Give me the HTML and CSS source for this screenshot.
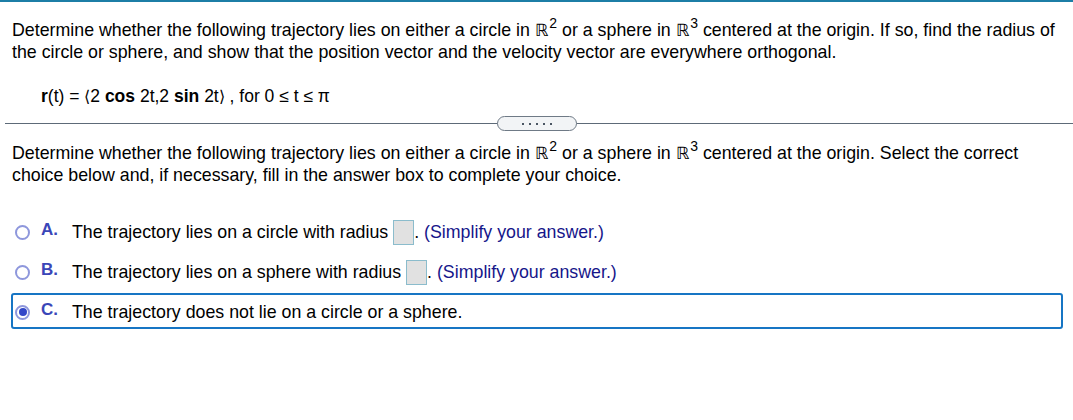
FILE: index.html
```html
<!DOCTYPE html>
<html>
<head>
<meta charset="utf-8">
<link rel="stylesheet" href="styles.css">
</head>
<body>
<div class="topbar"></div>
<div class="question">
  <p class="para">Determine whether the following trajectory lies on either a circle in <span class="bb">ℝ</span><sup>2</sup> or a sphere in <span class="bb">ℝ</span><sup>3</sup> centered at the origin. If so, find the radius of the circle or sphere, and show that the position vector and the velocity vector are everywhere orthogonal.</p>
  <p class="formula"><b>r</b>(t) = <span class="ang">⟨</span>2 <b>cos</b> 2t,2 <b>sin</b> 2t<span class="ang">⟩</span> , for 0 ≤ t ≤ π</p>
</div>
<div class="sep">
  <div class="sep-btn"><i class="dot"></i><i class="dot"></i><i class="dot"></i><i class="dot"></i><i class="dot"></i></div>
</div>
<div class="answer">
  <p class="para">Determine whether the following trajectory lies on either a circle in <span class="bb">ℝ</span><sup>2</sup> or a sphere in <span class="bb">ℝ</span><sup>3</sup> centered at the origin. Select the correct choice below and, if necessary, fill in the answer box to complete your choice.</p>
  <div class="options">
    <div class="opt">
      <span class="radio"></span><span class="letter">A.</span>
      <span class="txt">The trajectory lies on a circle with radius <span class="box"></span>. <span class="hint">(Simplify your answer.)</span></span>
    </div>
    <div class="opt">
      <span class="radio"></span><span class="letter">B.</span>
      <span class="txt">The trajectory lies on a sphere with radius <span class="box"></span>. <span class="hint">(Simplify your answer.)</span></span>
    </div>
    <div class="opt selected">
      <span class="radio on"></span><span class="letter">C.</span>
      <span class="txt">The trajectory does not lie on a circle or a sphere.</span>
    </div>
  </div>
</div>
</body>
</html>
```
FILE: styles.css
```css
html, body { margin: 0; padding: 0; background: #fff; }
body {
  font-family: "Liberation Sans", Arial, sans-serif;
  font-size: 17.8px;
  color: #000;
  width: 1073px;
  height: 420px;
  overflow: hidden;
}
.topbar { height: 2px; background: #1c7ea6; }
.question { padding: 17px 6px 0 12px; }
.para { margin: 0; line-height: 22px; }
.bb { font-family: "DejaVu Sans", sans-serif; font-size: 17px; }
sup { font-size: 14px; line-height: 0; vertical-align: 8px; margin-left: 1px; }
.formula { margin: 22px 0 0 29px; line-height: 22px; font-size: 17.5px; }
.ang { font-family: "DejaVu Sans", sans-serif; font-size: 16px; font-weight: 300; }
.sep {
  margin: 8px 0 0 5px;
  height: 15px;
  position: relative;
  display: flex;
  align-items: flex-start;
}
.sep::before {
  content: "";
  position: absolute;
  left: 0; right: 0; top: 7px;
  height: 1px; background: #5d6a78;
}
.sep-btn {
  position: relative;
  margin-left: 492px;
  width: 78px; height: 13px;
  border: 1px solid #6f7a86;
  border-radius: 8px;
  background: #f2f4f6;
  display: flex; align-items: center; justify-content: center;
  gap: 5px;
}
.dot { display: block; width: 2px; height: 2px; background: #4a5563; }
.answer { padding: 11px 6px 0 12px; }
.options { margin-top: 29px; display: flex; flex-direction: column; }
.opt {
  display: flex; align-items: center;
  box-sizing: border-box;
  height: 34px;
  margin-left: -1px;
  margin-bottom: 6px;
  border: 2px solid transparent;
  border-radius: 3px;
  padding-left: 2px;
  width: 1052px;
}
.opt.selected { border-color: #1675c4; margin-top: -2px; height: 36px; padding-top: 2px; }
.radio {
  width: 11px; height: 11px;
  border: 2px solid #8e97dc;
  border-radius: 50%;
  flex: none;
  position: relative;
  background: #fff;
}
.radio.on::after {
  content: ""; position: absolute;
  left: 1.5px; top: 1.5px; width: 8px; height: 8px;
  border-radius: 50%; background: #3347c8;
}
.letter {
  font-weight: bold; color: #3a46b8;
  margin-left: 11px; width: 31px;
  font-size: 17px;
  position: relative; top: -2px;
  flex: none;
}
.txt { display: flex; align-items: center; white-space: pre; }
.box {
  display: inline-block;
  box-sizing: border-box;
  width: 21px; height: 25px;
  background: #e1e1e1;
  border: 1px solid #8bbccc;
}
.hint { color: #16168a; }
```
